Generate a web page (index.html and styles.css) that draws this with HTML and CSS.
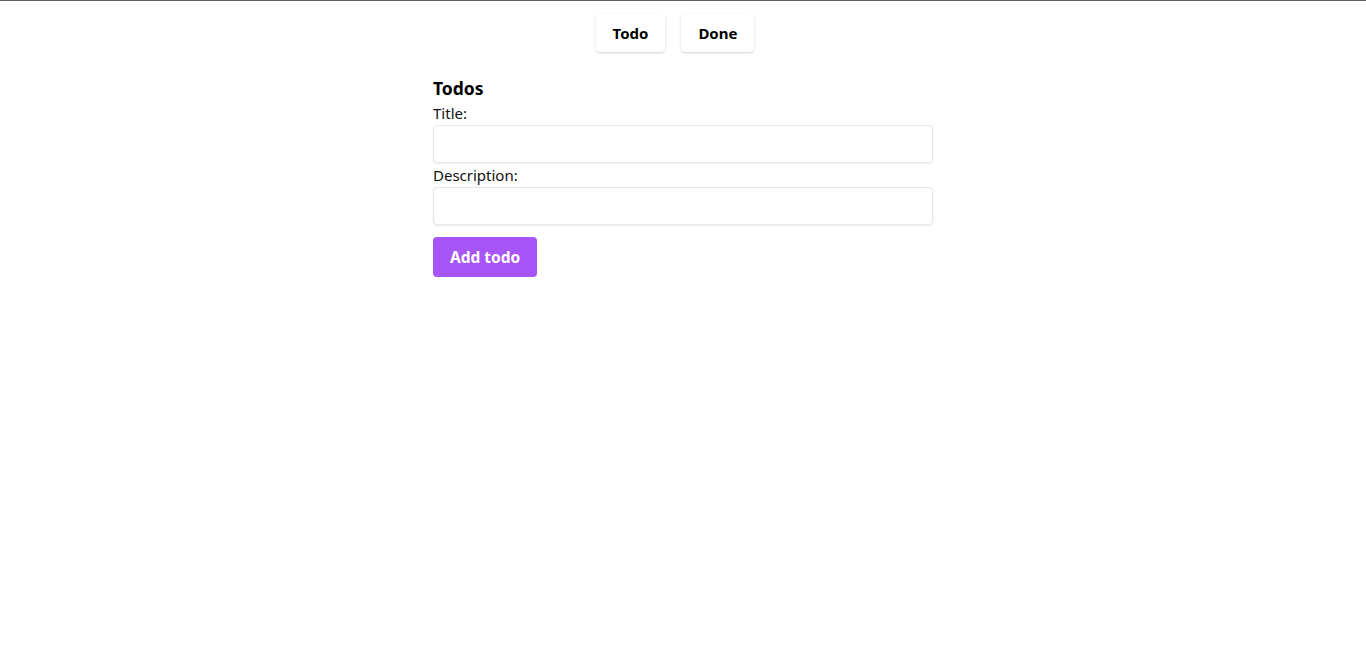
FILE: index.html
```html
<!DOCTYPE html>
<html lang="en">
<head>
<meta charset="utf-8">
<title>Todos</title>
<link rel="stylesheet" href="styles.css">
</head>
<body>
  <nav class="nav">
    <button class="nav-btn">Todo</button>
    <button class="nav-btn">Done</button>
  </nav>
  <main class="container">
    <h2 class="heading">Todos</h2>
    <form class="form">
      <label class="label" for="title">Title:</label>
      <input class="input" id="title" type="text">
      <label class="label" for="desc">Description:</label>
      <input class="input" id="desc" type="text">
      <button class="add-btn" type="button">Add todo</button>
    </form>
  </main>
</body>
</html>
```

FILE: styles.css
```css
* { box-sizing: border-box; }
html, body { background: #fff; }
body {
  margin: 0;
  border-top: 1px solid #5f5f5f;
  font-family: "Noto Sans", "Open Sans", sans-serif;
  color: #111;
}
.nav {
  display: flex;
  justify-content: center;
  padding-top: 13px;
}
.nav-btn {
  font-family: inherit;
  font-size: 15px;
  font-weight: 700;
  line-height: 22px;
  height: 38px;
  padding: 8px 17px;
  margin-right: 16px;
  background: #fff;
  color: #000;
  border: none;
  border-radius: 4px;
  box-shadow: 0 1px 3px rgba(0,0,0,0.12), 0 1px 2px rgba(0,0,0,0.06);
}
.container {
  width: 500px;
  margin: 24px auto 0;
}
.heading {
  margin: 0;
  font-size: 17.5px;
  line-height: 25px;
  font-weight: 700;
  color: #000;
}
.form {
  display: flex;
  flex-direction: column;
  align-items: flex-start;
}
.label {
  font-size: 15px;
  line-height: 24px;
  color: #111;
}
.input {
  width: 100%;
  height: 38px;
  border: 1px solid #e5e7eb;
  border-radius: 4px;
  box-shadow: 0 1px 2px rgba(0,0,0,0.08);
  padding: 0 12px;
  font-family: inherit;
  font-size: 15px;
}
.add-btn {
  margin-top: 12px;
  height: 40px;
  padding: 0 17px;
  background: #a855f7;
  color: #fff;
  border: none;
  border-radius: 4px;
  font-family: inherit;
  font-size: 15.5px;
  font-weight: 700;
}
```
